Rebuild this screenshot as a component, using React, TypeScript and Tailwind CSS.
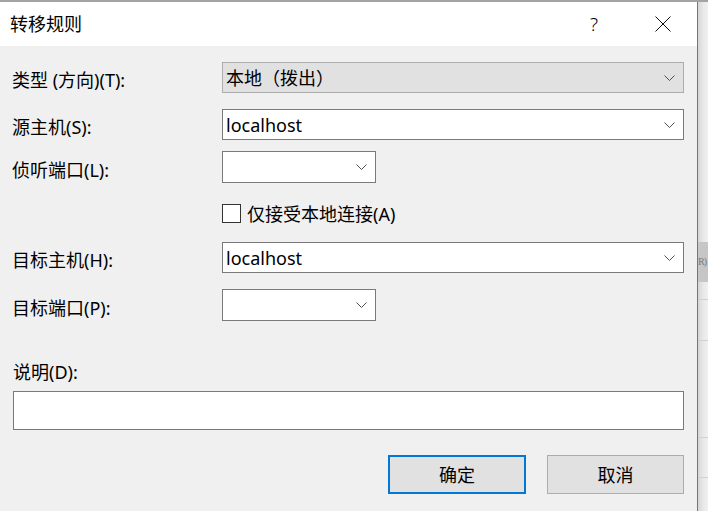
import React from "react";

const FONT = { fontFamily: '"Noto Sans", "Noto Sans CJK SC", sans-serif' };

function Chevron() {
  return (
    <svg width="11" height="6" viewBox="0 0 11 6" className="shrink-0">
      <path d="M0.5 0.5 L5.5 5.5 L10.5 0.5" fill="none" stroke="#505050" strokeWidth="1" />
    </svg>
  );
}

function Combo({ value, wide = true, disabled = false }: { value?: string; wide?: boolean; disabled?: boolean }) {
  return (
    <div
      className={
        "flex items-center justify-between h-full pl-[3px] pr-[8px] border " +
        (wide ? "w-[462px] " : "w-[154px] ") +
        (disabled ? "bg-[#e1e1e1] border-[#adadad]" : "bg-white border-[#7a7a7a]")
      }
    >
      <span className="leading-none">{value}</span>
      <Chevron />
    </div>
  );
}

function Row({ label, children, className = "" }: { label: string; children: React.ReactNode; className?: string }) {
  return (
    <div className={"flex items-center " + className}>
      <div className="w-[222px] pl-[12px] mt-[5px] leading-none">{label}</div>
      <div className="h-full flex">{children}</div>
    </div>
  );
}

export default function App() {
  return (
    <div className="w-[708px] h-[511px] flex flex-col overflow-hidden bg-[#f0f0f0] text-black text-[18px]" style={FONT}>
      <div className="h-[2px] bg-[#a3a3a3] shrink-0" />
      <div className="flex flex-1 min-h-0">
        {/* dialog */}
        <div className="w-[698px] shrink-0 flex flex-col border-r border-[#757575]">
          <div className="h-[44px] bg-white flex items-center shrink-0">
            <span className="pl-[10px] leading-none text-[18px]">转移规则</span>
            <span className="ml-auto mr-[57px] leading-none text-[19px] font-light">?</span>
            <svg width="16" height="16" viewBox="0 0 16 16" className="mr-[26px]">
              <path d="M0.5 0.5 L15.5 15.5 M15.5 0.5 L0.5 15.5" stroke="#111" strokeWidth="1" />
            </svg>
          </div>

          <div className="flex-1 bg-[#f0f0f0] flex flex-col">
            <Row label="类型 (方向)(T):" className="h-[31px] mt-[16px]">
              <Combo value="本地（拨出）" disabled />
            </Row>
            <Row label="源主机(S):" className="h-[31px] mt-[16px]">
              <Combo value="localhost" />
            </Row>
            <Row label="侦听端口(L):" className="h-[32px] mt-[11px]">
              <Combo wide={false} />
            </Row>
            <div className="flex items-center h-[19px] mt-[21px] pl-[222px]">
              <div className="w-[19px] h-[19px] border border-[#333] bg-white shrink-0" />
              <span className="ml-[6px] leading-none mt-[1px]">仅接受本地连接(A)</span>
            </div>
            <Row label="目标主机(H):" className="h-[31px] mt-[19px]">
              <Combo value="localhost" />
            </Row>
            <Row label="目标端口(P):" className="h-[32px] mt-[16px]">
              <Combo wide={false} />
            </Row>

            <div className="h-[24px] mt-[39px] pl-[13px] flex items-center leading-none">说明(D):</div>
            <div className="ml-[13px] mt-[7px] w-[671px] h-[39px] bg-white border border-[#7a7a7a]" />

            <div className="flex mt-[25px] pl-[388px] gap-[21px]">
              <button className="w-[138px] h-[39px] bg-[#e1e1e1] border-2 border-[#0078d7] leading-none">确定</button>
              <button className="w-[137px] h-[39px] bg-[#e1e1e1] border border-[#adadad] leading-none">取消</button>
            </div>
          </div>
        </div>

        {/* window behind */}
        <div className="flex-1 min-w-0 flex flex-col bg-gradient-to-r from-[#d6d6d6] via-[#e8e8e8] to-[#f0f0f0]">
          <div className="h-[240px]" />
          <div className="h-[40px] bg-[#c6c6c6] flex items-center">
            <span className="text-[#7a7a7a] text-[10px] tracking-[-1px] leading-none whitespace-nowrap" style={{ fontFamily: '"Liberation Serif", serif' }}>R)</span>
          </div>
          <div className="h-[17px]" />
          <div className="h-px bg-[#d2d2d2]" />
          <div className="h-[40px]" />
          <div className="h-px bg-[#d2d2d2]" />
          <div className="h-[96px]" />
          <div className="h-px bg-[#d2d2d2]" />
          <div className="h-[39px]" />
          <div className="h-px bg-[#d2d2d2]" />
        </div>
      </div>
    </div>
  );
}
